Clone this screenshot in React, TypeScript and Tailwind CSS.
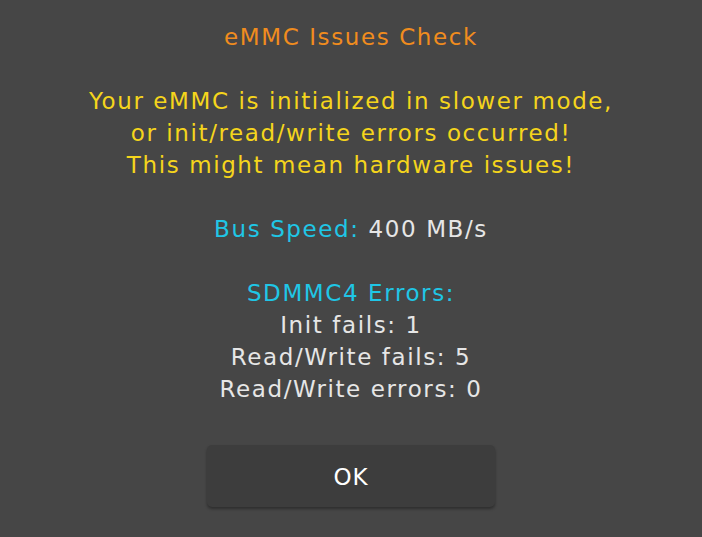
export default function App() {
  return (
    <div className="flex h-[537px] w-[702px] flex-col items-center bg-[#464646] pt-[21px] text-center text-[23px] leading-[32px] tracking-[1.6px] text-[#e6e6e6] [font-family:'DejaVu_Sans',sans-serif]">
      <div className="text-[#f08c1e]">eMMC Issues Check</div>
      <div className="h-[32px]" />
      <div className="text-[#f5d51c]">
        <div>Your eMMC is initialized in slower mode,</div>
        <div>or init/read/write errors occurred!</div>
        <div>This might mean hardware issues!</div>
      </div>
      <div className="h-[32px]" />
      <div>
        <span className="text-[#1fc6e6]">Bus Speed:</span> 400 MB/s
      </div>
      <div className="h-[32px]" />
      <div className="text-[#1fc6e6]">SDMMC4 Errors:</div>
      <div>Init fails: 1</div>
      <div>Read/Write fails: 5</div>
      <div>Read/Write errors: 0</div>
      <button
        type="button"
        className="mt-[40px] flex h-[62px] w-[288px] items-center justify-center rounded-[5px] bg-[#3d3d3d] pt-[2px] text-[23px] tracking-[1px] text-white shadow-[0_2px_3px_rgba(0,0,0,0.35)]"
      >
        OK
      </button>
    </div>
  );
}
